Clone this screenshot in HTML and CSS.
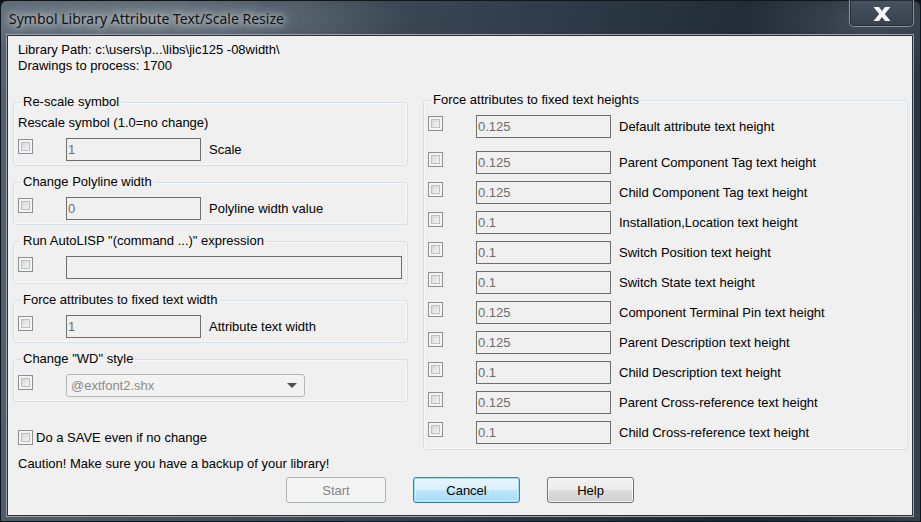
FILE: index.html
```html
<!DOCTYPE html>
<html>
<head>
<meta charset="utf-8">
<link rel="stylesheet" href="styles.css">
</head>
<body>
<div class="window">
  <div class="titlebar">
    <span class="title">Symbol Library Attribute Text/Scale Resize</span>
    <div class="close">
      <svg width="18" height="14" viewBox="0 0 18 14"><path d="M0.5 0 H6 L9 4 L12 0 H17.5 L11.8 7 L17.5 14 H12 L9 10 L6 14 H0.5 L6.2 7 Z" fill="#f4f6f8"/></svg>
    </div>
  </div>
  <div class="client">
    <div class="info">
      <div>Library Path: c:\users\p...\libs\jic125 -08width\</div>
      <div>Drawings to process: 1700</div>
    </div>
    <div class="columns">
      <div class="left">
        <fieldset class="group">
          <legend>Re-scale symbol</legend>
          <div class="subtitle">Rescale symbol (1.0=no change)</div>
          <div class="row"><span class="check"></span><span class="field">1</span><span class="lbl">Scale</span></div>
        </fieldset>
        <fieldset class="group">
          <legend>Change Polyline width</legend>
          <div class="row"><span class="check"></span><span class="field">0</span><span class="lbl">Polyline width value</span></div>
        </fieldset>
        <fieldset class="group">
          <legend>Run AutoLISP "(command ...)" expression</legend>
          <div class="row"><span class="check"></span><span class="field wide"></span></div>
        </fieldset>
        <fieldset class="group">
          <legend>Force attributes to fixed text width</legend>
          <div class="row"><span class="check"></span><span class="field">1</span><span class="lbl">Attribute text width</span></div>
        </fieldset>
        <fieldset class="group">
          <legend>Change "WD" style</legend>
          <div class="row"><span class="check"></span><span class="combo"><span>@extfont2.shx</span><span class="arrow"></span></span></div>
        </fieldset>
        <div class="save"><span class="check"></span><span>Do a SAVE even if no change</span></div>
        <div class="caution">Caution! Make sure you have a backup of your library!</div>
      </div>
      <div class="right">
        <fieldset class="group heights">
          <legend>Force attributes to fixed text heights</legend>
          <div class="row first"><span class="check"></span><span class="field">0.125</span><span class="lbl">Default attribute text height</span></div>
          <div class="row second"><span class="check"></span><span class="field">0.125</span><span class="lbl">Parent Component Tag text height</span></div>
          <div class="row"><span class="check"></span><span class="field">0.125</span><span class="lbl">Child Component Tag text height</span></div>
          <div class="row"><span class="check"></span><span class="field">0.1</span><span class="lbl">Installation,Location text height</span></div>
          <div class="row"><span class="check"></span><span class="field">0.1</span><span class="lbl">Switch Position text height</span></div>
          <div class="row"><span class="check"></span><span class="field">0.1</span><span class="lbl">Switch State text height</span></div>
          <div class="row"><span class="check"></span><span class="field">0.125</span><span class="lbl">Component Terminal Pin text height</span></div>
          <div class="row"><span class="check"></span><span class="field">0.125</span><span class="lbl">Parent Description text height</span></div>
          <div class="row"><span class="check"></span><span class="field">0.1</span><span class="lbl">Child Description text height</span></div>
          <div class="row"><span class="check"></span><span class="field">0.125</span><span class="lbl">Parent Cross-reference text height</span></div>
          <div class="row"><span class="check"></span><span class="field">0.1</span><span class="lbl">Child Cross-reference text height</span></div>
        </fieldset>
      </div>
    </div>
    <div class="buttons">
      <span class="btn disabled start">Start</span>
      <span class="btn default cancel">Cancel</span>
      <span class="btn help">Help</span>
    </div>
  </div>
</div>
</body>
</html>
```
FILE: styles.css
```css
* { box-sizing: border-box; }
html, body { margin: 0; padding: 0; }
body { width: 921px; height: 522px; overflow: hidden; background: #0e141a; }

.window {
  width: 921px;
  height: 522px;
  display: flex;
  flex-direction: column;
  border: 1px solid #10161d;
  border-radius: 7px 7px 0 0;
  background:
    radial-gradient(ellipse 260px 40px at 150px 18px, rgba(150,160,170,0.55), rgba(150,160,170,0) 100%),
    radial-gradient(ellipse 120px 60px at 860px 20px, rgba(90,100,112,0.6), rgba(90,100,112,0) 100%),
    linear-gradient(100deg, #56626e 0%, #46525e 25%, #2f3b48 55%, #1c2632 82%, #34404c 100%);
}

.titlebar {
  height: 35px;
  display: flex;
  align-items: flex-start;
  flex-shrink: 0;
}
.title {
  font-family: "Noto Sans", "Open Sans", sans-serif;
  font-size: 14px;
  color: #111;
  margin: 8px 0 0 8px;
  line-height: 20px;
  text-shadow: 0 0 6px rgba(230,235,240,0.9), 0 0 12px rgba(230,235,240,0.7), 0 0 18px rgba(230,235,240,0.5);
}
.close {
  margin-left: auto;
  margin-right: 6px;
  margin-top: -1px;
  width: 65px;
  height: 27px;
  border: 1px solid #8a949e;
  border-top: none;
  border-radius: 0 0 5px 5px;
  box-shadow: inset 0 0 0 1px #232d38;
  background: linear-gradient(#48535f, #36414d);
  display: flex;
  align-items: center;
  justify-content: center;
  padding-top: 1px;
}

.client {
  margin: 0 8px 6px 7px;
  flex: 1;
  background: #f0f0f0;
  box-shadow: 0 0 0 1px #27313c, 0 0 0 2px #99a3ad;
  font-family: "Liberation Sans", Arial, sans-serif;
  font-size: 13px;
  color: #000;
  display: flex;
  flex-direction: column;
}

.info {
  padding: 6px 0 0 10px;
  line-height: 16px;
}

.columns {
  display: flex;
  align-items: flex-start;
}
.left {
  width: 395px;
  margin-left: 5px;
  margin-top: 20px;
  display: flex;
  flex-direction: column;
  gap: 8px;
}
.right {
  width: 485px;
  margin-left: 15px;
  margin-top: 18px;
}

.group {
  margin: 0;
  padding: 0 0 4px 0;
  border: 1px solid #d5dfe5;
  border-radius: 3px;
  min-width: 0;
  box-shadow: inset 0 0 0 1px rgba(255,255,255,0.5);
}
.group legend {
  margin-left: 7px;
  padding: 0 2px;
  line-height: 16px;
  font-size: 13px;
}
.subtitle {
  margin: 5px 0 0 4px;
  line-height: 16px;
}
.row {
  display: flex;
  align-items: flex-start;
  margin-top: 7px;
  height: 23px;
}
.heights .row.second { margin-top: 13px; }
.heights { padding-bottom: 5px; }

.check {
  width: 15px;
  height: 15px;
  flex-shrink: 0;
  margin: 1px 0 0 4px;
  border: 1px solid #8f8f8f;
  background: #f4f4f4;
  position: relative;
}
.check::after {
  content: "";
  position: absolute;
  left: 2px; top: 2px; right: 2px; bottom: 2px;
  border: 1px solid #bcc0c5;
  background: linear-gradient(135deg, #d4d7db, #f5f5f5);
}

.field {
  margin-left: 33px;
  width: 135px;
  height: 23px;
  border: 1px solid #6e6e6e;
  background: #f0f0f0;
  color: #6d6d6d;
  line-height: 21px;
  padding-left: 1px;
}
.field.wide { width: 336px; }
.lbl {
  margin-left: 8px;
  line-height: 23px;
  white-space: nowrap;
}

.combo {
  margin-left: 33px;
  width: 239px;
  height: 23px;
  border: 1px solid #b5b5b5;
  border-radius: 3px;
  background: #f2f2f2;
  color: #8a8a8a;
  display: flex;
  align-items: center;
  justify-content: space-between;
  padding: 0 7px 0 4px;
}
.arrow {
  width: 0; height: 0;
  border-left: 5px solid transparent;
  border-right: 5px solid transparent;
  border-top: 5px solid #505050;
}

.save {
  margin-top: 20px;
  display: flex;
  align-items: center;
  height: 15px;
}
.save .check { margin: 0 3px 0 5px; }
.caution {
  margin: 3px 0 0 5px;
  line-height: 16px;
}

.buttons {
  display: flex;
  justify-content: center;
  gap: 27px;
  margin-top: 5px;
}
.btn {
  height: 26px;
  border-radius: 3px;
  display: flex;
  align-items: center;
  justify-content: center;
  border: 1px solid #707070;
  background: linear-gradient(#f2f2f2 0%, #ebebeb 50%, #dddddd 50%, #cfcfcf 100%);
  box-shadow: inset 0 0 0 1px rgba(255,255,255,0.8);
}
.start { width: 100px; }
.cancel { width: 107px; }
.help { width: 87px; }
.btn.disabled {
  border-color: #adb2b5;
  background: #f4f4f4;
  color: #838383;
  box-shadow: none;
}
.btn.default {
  border-color: #3c7fb1;
  background: linear-gradient(#e8f6fd 0%, #d9f0fc 50%, #bee6fd 50%, #a7d9f5 100%);
  box-shadow: inset 0 0 0 1px #9ddcfd, inset 0 0 0 2px rgba(255,255,255,0.4);
}
```
